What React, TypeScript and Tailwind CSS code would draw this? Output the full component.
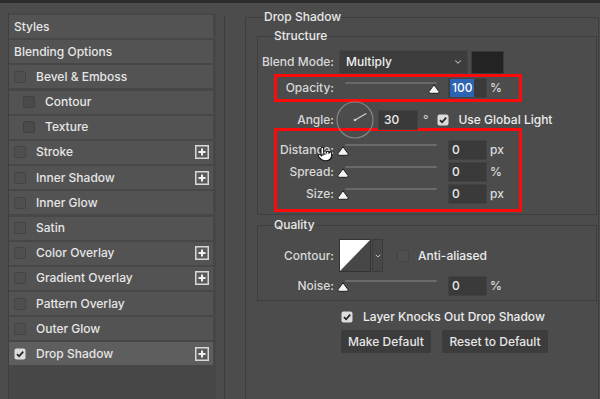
import { ChevronDown, Pointer } from "lucide-react";

const styleRows = [
  { label: "Styles", kind: "header" },
  { label: "Blending Options", kind: "header" },
  { label: "Bevel & Emboss", kind: "check" },
  { label: "Contour", kind: "sub" },
  { label: "Texture", kind: "sub" },
  { label: "Stroke", kind: "check", plus: true },
  { label: "Inner Shadow", kind: "check", plus: true },
  { label: "Inner Glow", kind: "check" },
  { label: "Satin", kind: "check" },
  { label: "Color Overlay", kind: "check", plus: true },
  { label: "Gradient Overlay", kind: "check", plus: true },
  { label: "Pattern Overlay", kind: "check" },
  { label: "Outer Glow", kind: "check" },
  { label: "Drop Shadow", kind: "check", plus: true, active: true },
];

function CheckMark() {
  return (
    <svg width="12" height="12" viewBox="0 0 12 12">
      <rect x="0.5" y="0.5" width="11" height="11" rx="2" fill="#dcdcdc" />
      <path d="M3 6.2 L5.1 8.3 L9.2 3.6" fill="none" stroke="#262626" strokeWidth="1.8" />
    </svg>
  );
}

function EmptyBox({ dim }: { dim?: boolean }) {
  return (
    <div
      className={
        dim
          ? "w-[12px] h-[12px] rounded-[2px] bg-[#4a4a4a] border border-[#414141]"
          : "w-[12px] h-[12px] rounded-[2px] bg-[#4f4f4f] border border-[#444444]"
      }
    />
  );
}

function PlusBox() {
  return (
    <svg width="14" height="14" viewBox="0 0 14 14">
      <rect x="0.75" y="0.75" width="12.5" height="12.5" fill="#5a5a5a" stroke="#d8d8d8" strokeWidth="1.5" />
      <path d="M7 3.5 V10.5 M3.5 7 H10.5" stroke="#f0f0f0" strokeWidth="2" />
    </svg>
  );
}

function Thumb() {
  return (
    <svg width="12" height="10" viewBox="0 0 12 10">
      <path d="M6 0.8 L11 7.6 Q11.6 9.3 9.8 9.3 L2.2 9.3 Q0.4 9.3 1 7.6 Z" fill="#f4f4f4" stroke="#202020" strokeWidth="1" />
    </svg>
  );
}

// slider: track + thumb, thumb class is left-0 (min) or left-[91px] (max)
function Slider({ thumb }: { thumb: string }) {
  return (
    <div className="relative w-[100px] h-[22px] shrink-0">
      <div className="absolute left-[8px] right-0 top-[5px] h-[2px] rounded-full bg-[#6a6a6a]" />
      <div className={`absolute top-[7px] leading-none ${thumb}`}>
        <Thumb />
      </div>
    </div>
  );
}

function NumField({ value, selected }: { value: string; selected?: boolean }) {
  return (
    <div className="ml-[11px] w-[39px] h-[20px] shrink-0 bg-[#3a3a3a] border border-[#424242] flex items-center pl-[3px] text-[#ececec]">
      {selected ? (
        <span className="bg-[#2c63b3] text-white h-[18px] flex items-center px-[2px] -ml-[2px]">{value}</span>
      ) : (
        value
      )}
    </div>
  );
}

function SliderRow({ label, unit, thumb, value, selected, labelW, cursor }: {
  label: string;
  unit: string;
  thumb: string;
  value: string;
  selected?: boolean;
  labelW: string;
  cursor?: boolean;
}) {
  return (
    <div className="flex items-center h-[22px]">
      <div className={`relative ${labelW} text-right text-[#d9d9d9]`}>
        {label}
        {cursor && (
          <div className="absolute left-[40px] top-[3px]">
            <Pointer size={16} fill="#ffffff" stroke="#111111" strokeWidth={1.6} />
          </div>
        )}
      </div>
      <div className="ml-[3px]">
        <Slider thumb={thumb} />
      </div>
      <NumField value={value} selected={selected} />
      <span className="ml-[3px] text-[#dcdcdc]">{unit}</span>
    </div>
  );
}

export default function App() {
  return (
    <div className="w-[600px] h-[399px] overflow-hidden bg-[#4c4c4c] border-t-[3px] border-[#2c2c2c] flex items-start font-['Inter',sans-serif] font-medium text-[12px] leading-[14px] text-[#e6e6e6]">
      {/* STYLES LIST */}
      <div className="ml-2 mt-[10px] w-[208px] self-stretch bg-[#474747] border-l border-[#3f3f3f] pt-[2px] pr-[3px] flex flex-col gap-[2.2px]">
        {styleRows.map((row) => (
          <div
            key={row.label}
            className={`h-[23px] shrink-0 flex items-center pr-[4px] ${
              row.active ? "bg-[#5e5e5e]" : "bg-[#535353]"
            } ${row.kind === "sub" ? "pl-[14px]" : "pl-[5px]"}`}
          >
            {row.kind !== "header" &&
              (row.active ? <CheckMark /> : <EmptyBox dim={row.kind === "sub"} />)}
            <span className={row.kind === "header" ? "" : "ml-[10px]"}>{row.label}</span>
            {row.plus && (
              <div className="ml-auto leading-none">
                <PlusBox />
              </div>
            )}
          </div>
        ))}
      </div>

      {/* DIVIDER */}
      <div className="ml-[8px] mt-[12px] w-px self-stretch bg-[#3c3c3c]" />

      {/* DROP SHADOW */}
      <fieldset className="ml-[20px] mt-[7px] w-[354px] h-[420px] border border-[#3e3e3e] pl-[11px]">
        <legend className="ml-[7px] text-[#e8e8e8]">Drop Shadow</legend>

        {/* STRUCTURE */}
        <fieldset className="mt-[5px] w-[340px] border border-[#3e3e3e] pb-[2px]">
          <legend className="ml-[16px] text-[#e8e8e8]">Structure</legend>

          {/* BLEND MODE */}
          <div className="mt-[7px] flex items-center h-[24px]">
            <div className="w-[76px] text-right text-[#d9d9d9]">Blend Mode:</div>
            <div className="ml-[5px] w-[129px] h-[24px] bg-[#3d3d3d] border border-[#444] flex items-center pl-[6px] pr-[4px]">
              <span className="text-[#f0f0f0]">Multiply</span>
              <ChevronDown className="ml-auto" size={10} strokeWidth={2.5} color="#bdbdbd" />
            </div>
            <div className="ml-[3px] w-[33px] h-[23px] bg-[#232323] border border-[#3a3a3a]" />
          </div>

          {/* OPACITY */}
          <div className="ml-[16px] w-[248px] h-[28px] border-[3px] border-[#ff0a0a] flex items-center">
            <SliderRow label="Opacity:" unit="%" thumb="left-[91px]" value="100" selected labelW="w-[57px]" />
          </div>

          {/* ANGLE */}
          <div className="flex items-center h-[36px]">
            <div className="w-[76px] text-right text-[#d9d9d9]">Angle:</div>
            <svg className="ml-[2px] shrink-0" width="38" height="38" viewBox="0 0 38 38">
              <circle cx="19" cy="19" r="18" fill="none" stroke="#858585" strokeWidth="1.2" />
              <path d="M19 19 L30.3 12.5" stroke="#cfcfcf" strokeWidth="1.3" />
              <circle cx="19" cy="19" r="1.3" fill="#cfcfcf" />
            </svg>
            <div className="ml-[4px] w-[40px] h-[20px] bg-[#3a3a3a] border border-[#424242] flex items-center pl-[5px] text-[#ececec]">
              30
            </div>
            <span className="ml-[5px] text-[#cfcfcf]">°</span>
            <div className="ml-[9px] leading-none">
              <CheckMark />
            </div>
            <span className="ml-[9px] text-[#ececec]">Use Global Light</span>
          </div>

          {/* DISTANCE / SPREAD / SIZE */}
          <div className="-mt-[10px] ml-[16px] w-[248px] h-[84px] border-[3px] border-[#ff0a0a] pt-[8px] flex flex-col">
            <SliderRow label="Distance:" unit="px" thumb="left-0" value="0" labelW="w-[57px]" cursor />
            <SliderRow label="Spread:" unit="%" thumb="left-0" value="0" labelW="w-[57px]" />
            <SliderRow label="Size:" unit="px" thumb="left-0" value="0" labelW="w-[57px]" />
          </div>
        </fieldset>

        {/* QUALITY */}
        <fieldset className="mt-[3px] w-[340px] border border-[#3e3e3e] pb-[3px]">
          <legend className="ml-[16px] text-[#e8e8e8]">Quality</legend>

          <div className="mt-[7px] flex items-center h-[33px]">
            <div className="w-[76px] text-right text-[#d9d9d9]">Contour:</div>
            <svg className="ml-[5px] shrink-0" width="32" height="33" viewBox="0 0 32 33">
              <rect x="0" y="0" width="32" height="33" fill="#474747" />
              <path d="M0 0 H32 L0 33 Z" fill="#ffffff" />
              <rect x="0.5" y="0.5" width="31" height="32" fill="none" stroke="#333" />
            </svg>
            <div className="ml-px w-[11px] h-[33px] bg-[#474747] border border-[#3b3b3b] flex items-center justify-center">
              <ChevronDown size={8} strokeWidth={3} color="#bdbdbd" />
            </div>
            <div className="ml-[14px]">
              <EmptyBox />
            </div>
            <span className="ml-[9px] text-[#ececec]">Anti-aliased</span>
          </div>

          <div className="mt-[3px]">
            <SliderRow label="Noise:" unit="%" thumb="left-0" value="0" labelW="w-[76px]" />
          </div>
        </fieldset>

        {/* LAYER KNOCKS OUT */}
        <div className="mt-[7px] ml-[84px] h-[18px] flex items-center">
          <CheckMark />
          <span className="ml-[10px] text-[#ececec]">Layer Knocks Out Drop Shadow</span>
        </div>

        {/* BUTTONS */}
        <div className="mt-[4px] ml-[84px] flex gap-[11px]">
          <div className="w-[90px] h-[23px] bg-[#3c3c3c] rounded-[2px] flex items-center justify-center text-[#e6e6e6]">
            Make Default
          </div>
          <div className="w-[106px] h-[23px] bg-[#3c3c3c] rounded-[2px] flex items-center justify-center text-[#e6e6e6]">
            Reset to Default
          </div>
        </div>
      </fieldset>
    </div>
  );
}
